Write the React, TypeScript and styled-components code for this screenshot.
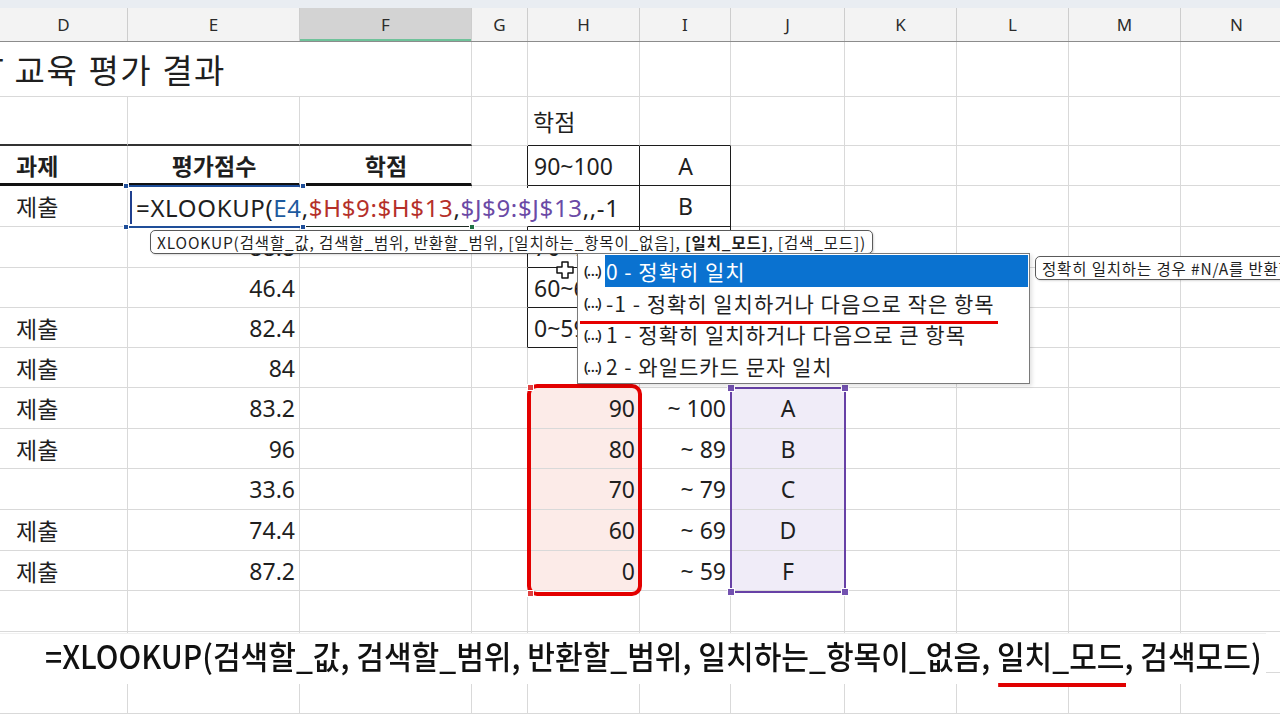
import React from 'react';
import styled, { createGlobalStyle } from 'styled-components';

const GlobalStyle = createGlobalStyle`
  html, body {
    margin: 0;
    padding: 0;
    background: #ffffff;
    overflow: hidden;
  }
`;

const COLS = ['D', 'E', 'F', 'G', 'H', 'I', 'J', 'K', 'L', 'M', 'N'];
const COL_WIDTHS = [128, 172, 172, 56, 112, 91, 114, 112, 112, 112, 112];
const ROW_HEIGHTS = [55, 49, 40, 41, 41, 40, 40, 40, 41, 40, 41, 41, 40, 41, 41, 41];

const GRID_LINE = '#d9d9d9';
const BOX = '#1c1c1c';
const PINK = '#fcebe8';
const LAVENDER = '#f0ecf8';
const CELL_FONT = `"Noto Sans", "Noto Sans CJK KR", sans-serif`;
const KR_FONT = `"Noto Sans CJK KR", "Noto Sans", sans-serif`;

const Frame = styled.div`
  position: relative;
  width: 1280px;
  height: 718px;
  overflow: hidden;
  background: #fff;
  font-family: ${CELL_FONT};
`;

const TopStrip = styled.div`
  height: 8px;
  background: #e9edf2;
`;

const ColumnHeader = styled.div`
  display: grid;
  grid-template-columns: ${COL_WIDTHS.map((w) => `${w}px`).join(' ')};
  height: 34px;
  background: #f3f3f3;
  border-bottom: 1px solid #8c8c8c;
  box-sizing: border-box;
`;

const ColumnLabel = styled.div<{ $selected?: boolean }>`
  display: flex;
  align-items: center;
  justify-content: center;
  font-size: 17px;
  color: #2b2b2b;
  border-right: 1px solid #cdcdcd;
  background: ${(p) => (p.$selected ? '#d3d3d3' : 'transparent')};
  box-shadow: ${(p) => (p.$selected ? 'inset 0 -2px 0 #6fc29a' : 'none')};
`;

const Sheet = styled.div`
  display: grid;
  grid-template-columns: ${COL_WIDTHS.map((w) => `${w}px`).join(' ')};
  grid-template-rows: ${ROW_HEIGHTS.map((h) => `${h}px`).join(' ')};
`;

type Align = 'l' | 'c' | 'r';

const Cell = styled.div<{
  $align: Align;
  $bold?: boolean;
  $indent: number;
  $fill?: string;
  $rb: string;
  $bb: string;
  $bbw: number;
  $span: number;
  $title?: boolean;
}>`
  grid-column: span ${(p) => p.$span};
  display: flex;
  align-items: center;
  justify-content: ${(p) => (p.$align === 'c' ? 'center' : p.$align === 'r' ? 'flex-end' : 'flex-start')};
  box-sizing: border-box;
  padding: 0 4px 0 ${(p) => p.$indent}px;
  border-right: 1px solid ${(p) => p.$rb};
  border-bottom: ${(p) => p.$bbw}px solid ${(p) => p.$bb};
  background: ${(p) => p.$fill || 'transparent'};
  font-size: ${(p) => (p.$title ? 33 : 23)}px;
  letter-spacing: ${(p) => (p.$title ? 1.5 : 0)}px;
  font-weight: ${(p) => (p.$bold ? 700 : 400)};
  color: #1f1f1f;
  white-space: nowrap;
  overflow: hidden;
`;

// the title overflows in from columns scrolled off to the left
const TitleText = styled.span`
  margin-left: -33px;
`;

type Spec = {
  t?: string;
  a?: Align;
  b?: boolean;
  fill?: string;
  rb?: string;
  bb?: string;
  bbw?: number;
  span?: number;
  title?: boolean;
  indent?: number;
};

// one row of 11 cells (D..N), with some columns overridden
const row = (over: Record<number, Spec>): Spec[] => COLS.map((_, i) => over[i] || {});

const boxRow = (h: string, i: string, extra: Record<number, Spec> = {}) =>
  row({
    3: { rb: BOX },
    4: { t: h, rb: BOX, bb: BOX, indent: 6 },
    5: { t: i, a: 'c', rb: BOX, bb: BOX },
    ...extra,
  });

const rangeRow = (d: string, e: string, h: string, i: string, j: string) =>
  row({
    0: { t: d, indent: 16 },
    1: { t: e, a: 'r' },
    4: { t: h, a: 'r', fill: PINK },
    5: { t: i, a: 'r' },
    6: { t: j, a: 'c', fill: LAVENDER },
  });

const ROWS: Spec[][] = [
  [{ span: 3, title: true, t: 'IT 교육 평가 결과' }, ...COLS.slice(3).map(() => ({}))],
  row({
    0: { bb: '#333', bbw: 2 },
    1: { bb: '#333', bbw: 2 },
    2: { bb: '#333', bbw: 2 },
    4: { t: '학점', bb: BOX, indent: 5 },
    5: { bb: BOX },
  }),
  boxRow('90~100', 'A', {
    0: { t: '과제', b: true, indent: 16, bb: '#111', bbw: 3 },
    1: { t: '평가점수', b: true, a: 'c', bb: '#111', bbw: 3 },
    2: { t: '학점', b: true, a: 'c', bb: '#111', bbw: 3 },
  }),
  boxRow('80~89', 'B', { 0: { t: '제출', indent: 16 }, 2: { bb: '#1e2a22', bbw: 2 } }),
  boxRow('70~79', 'C', { 1: { t: '88.8', a: 'r' } }),
  boxRow('60~69', 'D', { 1: { t: '46.4', a: 'r' } }),
  boxRow('0~59', 'F', { 0: { t: '제출', indent: 16 }, 1: { t: '82.4', a: 'r' } }),
  row({ 0: { t: '제출', indent: 16 }, 1: { t: '84', a: 'r' } }),
  rangeRow('제출', '83.2', '90', '~ 100', 'A'),
  rangeRow('제출', '96', '80', '~ 89', 'B'),
  rangeRow('', '33.6', '70', '~ 79', 'C'),
  rangeRow('제출', '74.4', '60', '~ 69', 'D'),
  rangeRow('제출', '87.2', '0', '~ 59', 'F'),
  row({}),
  row({}),
  row({}),
];

/* ---------- things lying over the sheet ---------- */

const EditBox = styled.div`
  position: absolute;
  left: 128px;
  top: 188px;
  width: 511px;
  height: 38px;
  background: #fff;
  display: flex;
  align-items: center;
  gap: 4px;
  padding-left: 2px;
  box-sizing: border-box;
  font-size: 24px;
  letter-spacing: 0.65px;
  color: #1f1f1f;
  white-space: nowrap;
`;

const Caret = styled.span`
  width: 2px;
  height: 33px;
  background: #1f3f8f;
`;

const Ref = styled.span<{ $color: string }>`
  color: ${(p) => p.$color};
`;

const Selection = styled.div`
  position: absolute;
  left: 127px;
  top: 185px;
  width: 175px;
  height: 43px;
  box-sizing: border-box;
  border-top: 2px solid #1f4e99;
  border-bottom: 2px solid #1f4e99;
`;

type Corner = 'tl' | 'tr' | 'bl' | 'br';

const Handle = styled.span<{ $at: Corner; $color: string; $size: number }>`
  position: absolute;
  width: ${(p) => p.$size}px;
  height: ${(p) => p.$size}px;
  background: ${(p) => p.$color};
  border: 1px solid #fff;
  box-sizing: border-box;
  ${(p) => (p.$at[0] === 't' ? 'top' : 'bottom')}: ${(p) => -p.$size / 2 - 1}px;
  ${(p) => (p.$at[1] === 'l' ? 'left' : 'right')}: ${(p) => -p.$size / 2 - 1}px;
`;

const FillHandle = styled.span`
  position: absolute;
  left: 469px;
  top: 224px;
  width: 6px;
  height: 6px;
  background: #217346;
  border: 1px solid #fff;
  box-sizing: border-box;
`;

const Tip = styled.div<{ $x: number; $y: number }>`
  position: absolute;
  left: ${(p) => p.$x}px;
  top: ${(p) => p.$y}px;
  height: 24px;
  padding: 0 6px;
  display: flex;
  align-items: center;
  background: #fff;
  border: 1px solid #5a5a5a;
  border-radius: 5px;
  box-sizing: border-box;
  font-family: ${KR_FONT};
  font-size: 15.5px;
  letter-spacing: 0.85px;
  color: #1f1f1f;
  white-space: nowrap;
  box-shadow: 1px 1px 2px rgba(0, 0, 0, 0.15);
`;

const TipBold = styled.b`
  font-weight: 700;
`;

const Dropdown = styled.div`
  position: absolute;
  left: 577px;
  top: 253px;
  width: 453px;
  height: 131px;
  box-sizing: border-box;
  border: 1px solid #7a7a7a;
  background: #fff;
  display: flex;
  flex-direction: column;
  padding: 1px;
  box-shadow: 2px 2px 4px rgba(0, 0, 0, 0.12);
`;

const Option = styled.div`
  flex: 1;
  display: flex;
  align-items: stretch;
`;

const OptionIcon = styled.div`
  width: 26px;
  display: flex;
  align-items: center;
  justify-content: center;
  font-family: ${CELL_FONT};
  font-size: 14px;
  font-weight: 600;
  letter-spacing: -1.5px;
  color: #222;
`;

const OptionLabel = styled.div<{ $active?: boolean }>`
  flex: 1;
  display: flex;
  align-items: center;
  padding-left: 1px;
  font-family: ${KR_FONT};
  font-size: 21px;
  letter-spacing: 1px;
  color: ${(p) => (p.$active ? '#fff' : '#1f1f1f')};
  background: ${(p) => (p.$active ? '#0a72d0' : 'transparent')};
  white-space: nowrap;
`;

// red pen mark drawn under an option, starting under its icon
const OptionText = styled.span<{ $marked?: boolean }>`
  position: relative;
  &::after {
    content: '';
    display: ${(p) => (p.$marked ? 'block' : 'none')};
    position: absolute;
    left: -26px;
    right: -3px;
    bottom: -6px;
    height: 3px;
    background: #e60000;
  }
`;

const RedFrame = styled.div`
  position: absolute;
  left: 527px;
  top: 384px;
  width: 115px;
  height: 212px;
  box-sizing: border-box;
  border: 4px solid #e30000;
  border-radius: 10px;
`;

const PurpleFrame = styled.div`
  position: absolute;
  left: 730px;
  top: 387px;
  width: 116px;
  height: 206px;
  box-sizing: border-box;
  border: 2px solid #6741a6;
`;

const PlusCursor = styled.svg`
  position: absolute;
  left: 556px;
  top: 261px;
`;

const Banner = styled.div`
  position: absolute;
  left: 0;
  top: 633px;
  width: 1266px;
  height: 51px;
  box-sizing: border-box;
  padding-bottom: 8px;
  background: #fff;
  border-top: 1px solid #f0f0f0;
  display: flex;
  align-items: center;
`;

const BannerText = styled.span`
  display: inline-block;
  margin-left: 45px;
  font-family: ${KR_FONT};
  font-size: 32px;
  line-height: 1;
  font-weight: 500;
  color: #111;
  white-space: nowrap;
  transform: scaleX(0.94);
  transform-origin: left center;
`;

const Underlined = styled.span`
  position: relative;
  &::after {
    content: '';
    position: absolute;
    left: 1px;
    right: -2px;
    bottom: -9px;
    height: 4px;
    background: #e00000;
  }
`;

const OPTIONS = [
  '0 - 정확히 일치',
  '-1 - 정확히 일치하거나 다음으로 작은 항목',
  '1 - 정확히 일치하거나 다음으로 큰 항목',
  '2 - 와일드카드 문자 일치',
];

const corners: Corner[] = ['tl', 'tr', 'bl', 'br'];

export default function App() {
  return (
    <Frame>
      <GlobalStyle />
      <TopStrip />
      <ColumnHeader>
        {COLS.map((c) => (
          <ColumnLabel key={c} $selected={c === 'F'}>
            {c}
          </ColumnLabel>
        ))}
      </ColumnHeader>
      <Sheet>
        {ROWS.map((cells, r) =>
          cells.map((s, c) => (
            <Cell
              key={`${r}-${c}`}
              $align={s.a || 'l'}
              $bold={s.b}
              $indent={s.indent ?? 5}
              $fill={s.fill}
              $rb={s.rb || GRID_LINE}
              $bb={s.bb || GRID_LINE}
              $bbw={s.bbw || 1}
              $span={s.span || 1}
              $title={s.title}
            >
              {s.title ? <TitleText>{s.t}</TitleText> : s.t}
            </Cell>
          ))
        )}
      </Sheet>

      <EditBox>
        <Caret />
        <span>
          =XLOOKUP(<Ref $color="#1d5a9e">E4</Ref>,<Ref $color="#b5302a">$H$9:$H$13</Ref>,
          <Ref $color="#6b4aa6">$J$9:$J$13</Ref>,,-1
        </span>
      </EditBox>
      <Selection>
        {corners.map((k) => (
          <Handle key={k} $at={k} $color="#1f4e99" $size={6} />
        ))}
      </Selection>
      <FillHandle />

      <RedFrame>
        <Handle $at="tl" $color="#e04040" $size={7} />
        <Handle $at="bl" $color="#e04040" $size={7} />
      </RedFrame>
      <PurpleFrame>
        {corners.map((k) => (
          <Handle key={k} $at={k} $color="#7352b0" $size={8} />
        ))}
      </PurpleFrame>

      <Tip $x={150} $y={230}>
        XLOOKUP(검색할_값, 검색할_범위, 반환할_범위, [일치하는_항목이_없음],&nbsp;
        <TipBold>[일치_모드]</TipBold>, [검색_모드])
      </Tip>

      <Dropdown>
        {OPTIONS.map((o, i) => (
          <Option key={o}>
            <OptionIcon>(…)</OptionIcon>
            <OptionLabel $active={i === 0}>
              <OptionText $marked={i === 1}>{o}</OptionText>
            </OptionLabel>
          </Option>
        ))}
      </Dropdown>

      <Tip $x={1035} $y={256}>정확히 일치하는 경우 #N/A를 반환합니다.</Tip>

      <PlusCursor width="18" height="18" viewBox="0 0 18 18">
        <path
          d="M6 1h6v5h5v6h-5v5H6v-5H1V6h5z"
          fill="#fff"
          stroke="#111"
          strokeWidth="1.5"
          strokeLinejoin="round"
        />
      </PlusCursor>

      <Banner>
        <BannerText>
          =XLOOKUP(검색할_값, 검색할_범위, 반환할_범위, 일치하는_항목이_없음, <Underlined>일치_모드</Underlined>,
          검색모드)
        </BannerText>
      </Banner>
    </Frame>
  );
}
